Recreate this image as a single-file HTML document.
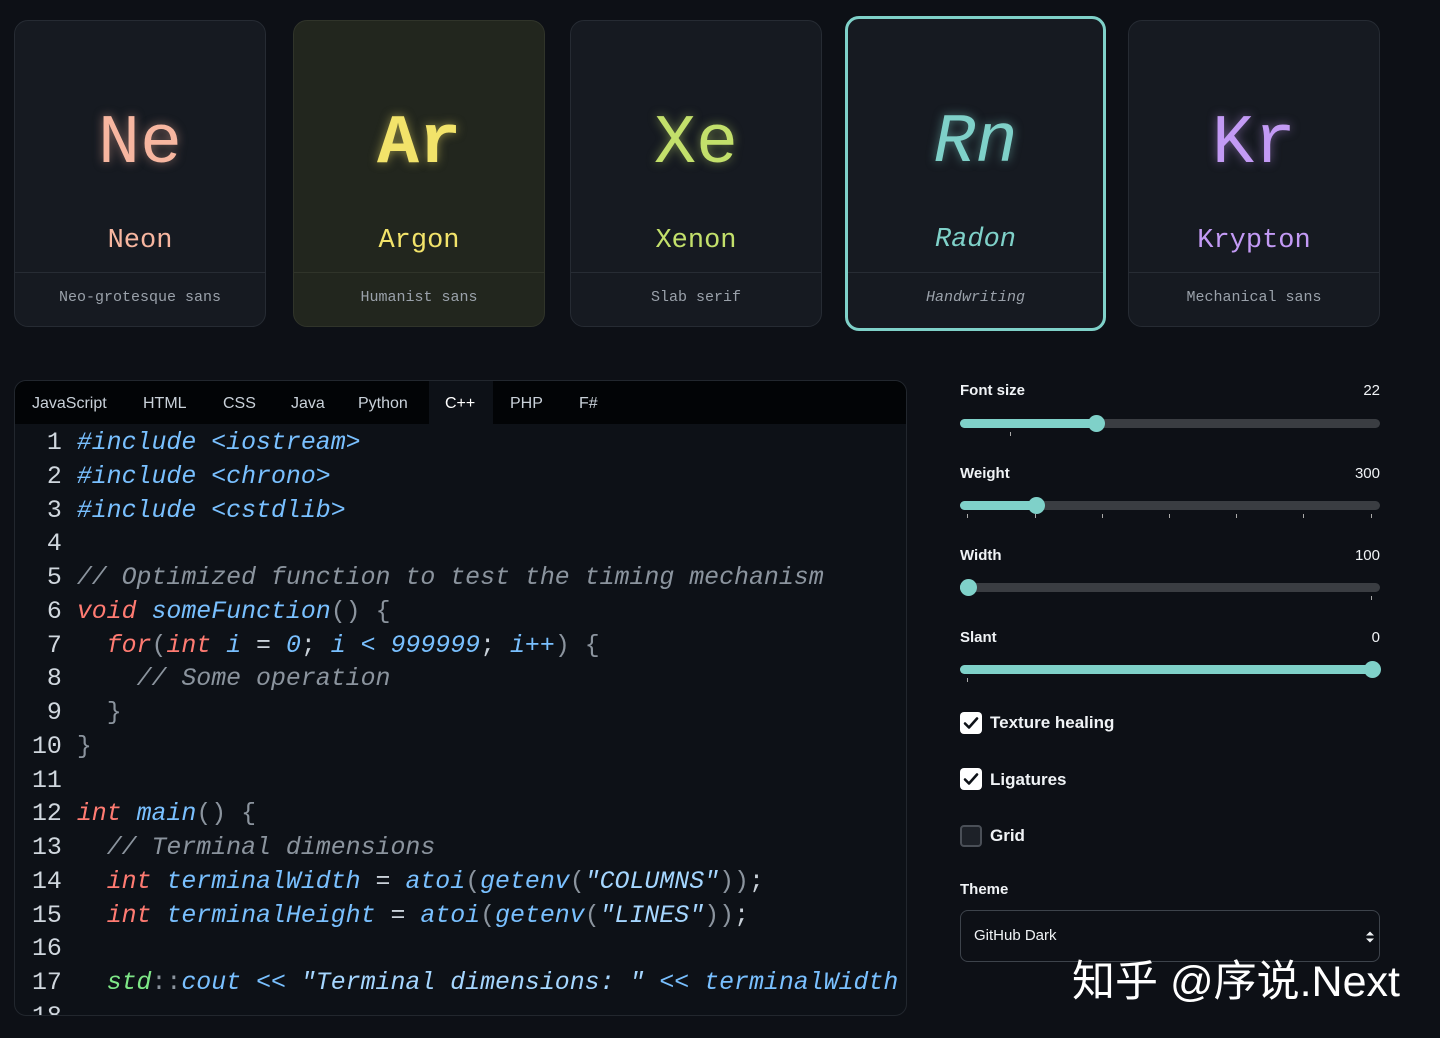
<!DOCTYPE html>
<html><head><meta charset="utf-8"><style>
*{margin:0;padding:0;box-sizing:border-box}
body{width:1440px;height:1038px;background:#0d1016;position:relative;overflow:hidden;font-family:"Liberation Sans",sans-serif;color:#e6edf3}
.card{position:absolute;top:20px;width:252px;height:307px;background:#161a21;border:1px solid #262b33;border-radius:14px;overflow:hidden}
.card .sym{position:absolute;top:84px;left:0;right:0;text-align:center;font-family:"Liberation Mono",monospace;font-size:70px;line-height:80px}
.card .nm{position:absolute;top:205px;left:0;right:0;text-align:center;font-family:"Liberation Mono",monospace;font-size:27px}
.card .div{position:absolute;top:251px;left:0;right:0;border-top:1px solid #272c34}
.card .sub{position:absolute;top:268px;left:0;right:0;text-align:center;font-family:"Liberation Mono",monospace;font-size:15px;color:#9aa1aa}
.code{position:absolute;left:14px;top:380px;width:893px;height:636px;background:#0d1117;border:1px solid #22272e;border-radius:12px;overflow:hidden}
.tabs{height:43px;background:#020406;position:relative;font-size:16px;color:#c9d1d9}
.tabs span{position:absolute;top:14px}
.tabs .act{position:absolute;left:414px;top:0;width:64px;height:43px;background:#0d1117}
pre{position:absolute;left:17px;top:46px;font-family:"Liberation Mono",monospace;font-size:24.9px;line-height:33.75px;color:#c9d1d9}
.n{color:#d0d7de}.b{color:#79c0ff;font-style:italic}.r{color:#ff7b72;font-style:italic}.c{color:#8b949e;font-style:italic}.g{color:#7ee787;font-style:italic}.s{color:#a5d6ff;font-style:italic}.p{color:#8b949e}
.lbl{position:absolute;left:960px;font-size:15px;font-weight:bold;color:#f0f3f6}
.val{position:absolute;right:60px;font-size:15px;color:#f0f3f6}
.track{position:absolute;left:960px;width:420px;height:9px;border-radius:5px;background:#3a3d42}
.fill{position:absolute;left:0;top:0;height:9px;border-radius:5px;background:#7fd1c9}
.thumb{position:absolute;top:-4px;width:17px;height:17px;border-radius:50%;background:#7fd1c9;margin-left:-8px}
.tick{position:absolute;width:1px;height:4px;background:#aaa}
.cb{position:absolute;left:960px;width:22px;height:22px;border-radius:4px;background:#fff}
.cbl{position:absolute;left:990px;font-size:17px;font-weight:bold;color:#f0f3f6}
</style></head><body>

<div class="card" style="left:14px"><div class="sym" style="color:#f7b6a0;text-shadow:0 0 10px rgba(247,182,160,.5)">Ne</div><div class="nm" style="color:#f7b6a0">Neon</div><div class="div"></div><div class="sub">Neo-grotesque sans</div></div>
<div class="card" style="left:293px;background:#22261e;border-color:#30342a"><div class="sym" style="color:#f2e36a;text-shadow:0 0 10px rgba(242,227,106,.5);font-weight:bold">Ar</div><div class="nm" style="color:#f2e36a">Argon</div><div class="div" style="border-color:#30342a"></div><div class="sub">Humanist sans</div></div>
<div class="card" style="left:570px"><div class="sym" style="color:#c3e06b;text-shadow:0 0 10px rgba(195,224,107,.5)">Xe</div><div class="nm" style="color:#c3e06b">Xenon</div><div class="div"></div><div class="sub">Slab serif</div></div>
<div class="card" style="left:845px;top:16px;width:261px;height:315px;border:3px solid #7fd1c9"><div class="sym" style="top:85px;color:#7fd1c9;font-style:italic;text-shadow:0 0 10px rgba(127,209,201,.5)">Rn</div><div class="nm" style="top:206px;color:#7fd1c9;font-style:italic">Radon</div><div class="div" style="top:253px"></div><div class="sub" style="top:270px;font-style:italic">Handwriting</div></div>
<div class="card" style="left:1128px"><div class="sym" style="color:#c39af5;text-shadow:0 0 10px rgba(195,154,245,.5)">Kr</div><div class="nm" style="color:#c39af5">Krypton</div><div class="div"></div><div class="sub">Mechanical sans</div></div>

<div class="code">
<div class="tabs"><div class="act"></div>
<span style="left:17px">JavaScript</span><span style="left:128px">HTML</span><span style="left:208px">CSS</span><span style="left:276px">Java</span><span style="left:343px">Python</span><span style="left:430px;color:#fff">C++</span><span style="left:495px">PHP</span><span style="left:564px">F#</span></div>
<pre><span class="n"> 1</span> <span class="b">#include &lt;iostream&gt;</span>
<span class="n"> 2</span> <span class="b">#include &lt;chrono&gt;</span>
<span class="n"> 3</span> <span class="b">#include &lt;cstdlib&gt;</span>
<span class="n"> 4</span>
<span class="n"> 5</span> <span class="c">// Optimized function to test the timing mechanism</span>
<span class="n"> 6</span> <span class="r">void</span> <span class="b">someFunction</span><span class="p">()</span> <span class="p">{</span>
<span class="n"> 7</span>   <span class="r">for</span><span class="p">(</span><span class="r">int</span> <span class="b">i</span> = <span class="b">0</span>; <span class="b">i</span> <span class="b">&lt;</span> <span class="b">999999</span>; <span class="b">i++</span><span class="p">)</span> <span class="p">{</span>
<span class="n"> 8</span>     <span class="c">// Some operation</span>
<span class="n"> 9</span>   <span class="p">}</span>
<span class="n">10</span> <span class="p">}</span>
<span class="n">11</span>
<span class="n">12</span> <span class="r">int</span> <span class="b">main</span><span class="p">()</span> <span class="p">{</span>
<span class="n">13</span>   <span class="c">// Terminal dimensions</span>
<span class="n">14</span>   <span class="r">int</span> <span class="b">terminalWidth</span> = <span class="b">atoi</span><span class="p">(</span><span class="b">getenv</span><span class="p">(</span><span class="s">"COLUMNS"</span><span class="p">))</span>;
<span class="n">15</span>   <span class="r">int</span> <span class="b">terminalHeight</span> = <span class="b">atoi</span><span class="p">(</span><span class="b">getenv</span><span class="p">(</span><span class="s">"LINES"</span><span class="p">))</span>;
<span class="n">16</span>
<span class="n">17</span>   <span class="g">std</span><span class="p">::</span><span class="b">cout</span> <span class="b">&lt;&lt;</span> <span class="s">"Terminal dimensions: "</span> <span class="b">&lt;&lt;</span> <span class="b">terminalWidth</span>
<span class="n">18</span></pre>
</div>

<div class="lbl" style="top:382px">Font size</div><div class="val" style="top:382px">22</div>
<div class="track" style="top:419px"><div class="fill" style="width:136px"></div><div class="thumb" style="left:136px"></div></div>
<div class="tick" style="left:1010px;top:432px"></div>

<div class="lbl" style="top:465px">Weight</div><div class="val" style="top:465px">300</div>
<div class="track" style="top:501px"><div class="fill" style="width:76px"></div><div class="thumb" style="left:76px"></div></div>
<div class="tick" style="left:967px;top:514px"></div><div class="tick" style="left:1035px;top:514px"></div><div class="tick" style="left:1102px;top:514px"></div><div class="tick" style="left:1169px;top:514px"></div><div class="tick" style="left:1236px;top:514px"></div><div class="tick" style="left:1303px;top:514px"></div><div class="tick" style="left:1371px;top:514px"></div>

<div class="lbl" style="top:547px">Width</div><div class="val" style="top:547px">100</div>
<div class="track" style="top:583px"><div class="fill" style="width:8px"></div><div class="thumb" style="left:8px"></div></div>
<div class="tick" style="left:1371px;top:596px"></div>

<div class="lbl" style="top:629px">Slant</div><div class="val" style="top:629px">0</div>
<div class="track" style="top:665px"><div class="fill" style="width:412px"></div><div class="thumb" style="left:412px"></div></div>
<div class="tick" style="left:967px;top:678px"></div>

<div class="cb" style="top:712px"><svg width="22" height="22" viewBox="0 0 22 22"><path d="M5 11.5l4 4 8-9" stroke="#0d1117" stroke-width="2.6" fill="none" stroke-linecap="round" stroke-linejoin="round"/></svg></div>
<div class="cbl" style="top:713px">Texture healing</div>
<div class="cb" style="top:768px"><svg width="22" height="22" viewBox="0 0 22 22"><path d="M5 11.5l4 4 8-9" stroke="#0d1117" stroke-width="2.6" fill="none" stroke-linecap="round" stroke-linejoin="round"/></svg></div>
<div class="cbl" style="top:770px">Ligatures</div>
<div class="cb" style="top:825px;background:#1d2128;border:2px solid #4a4f57"></div>
<div class="cbl" style="top:826px">Grid</div>

<div class="lbl" style="top:881px">Theme</div>
<div style="position:absolute;left:960px;top:910px;width:420px;height:52px;border:1px solid #3d434b;border-radius:8px;background:#0d1016;font-size:15px;color:#f0f3f6;padding:16px 0 0 13px">GitHub Dark
<svg style="position:absolute;right:4px;top:18px" width="10" height="16" viewBox="0 0 10 16"><path d="M1 6.5L5 2.5 9 6.5zM1 9.5L5 13.5 9 9.5z" fill="#f0f3f6"/></svg></div>

<div style="position:absolute;left:1072px;top:947px;font-family:'Liberation Sans','Noto Sans CJK SC',sans-serif;font-size:43px;color:#fff;white-space:nowrap">知乎 @序说.Next</div>
</body></html>
